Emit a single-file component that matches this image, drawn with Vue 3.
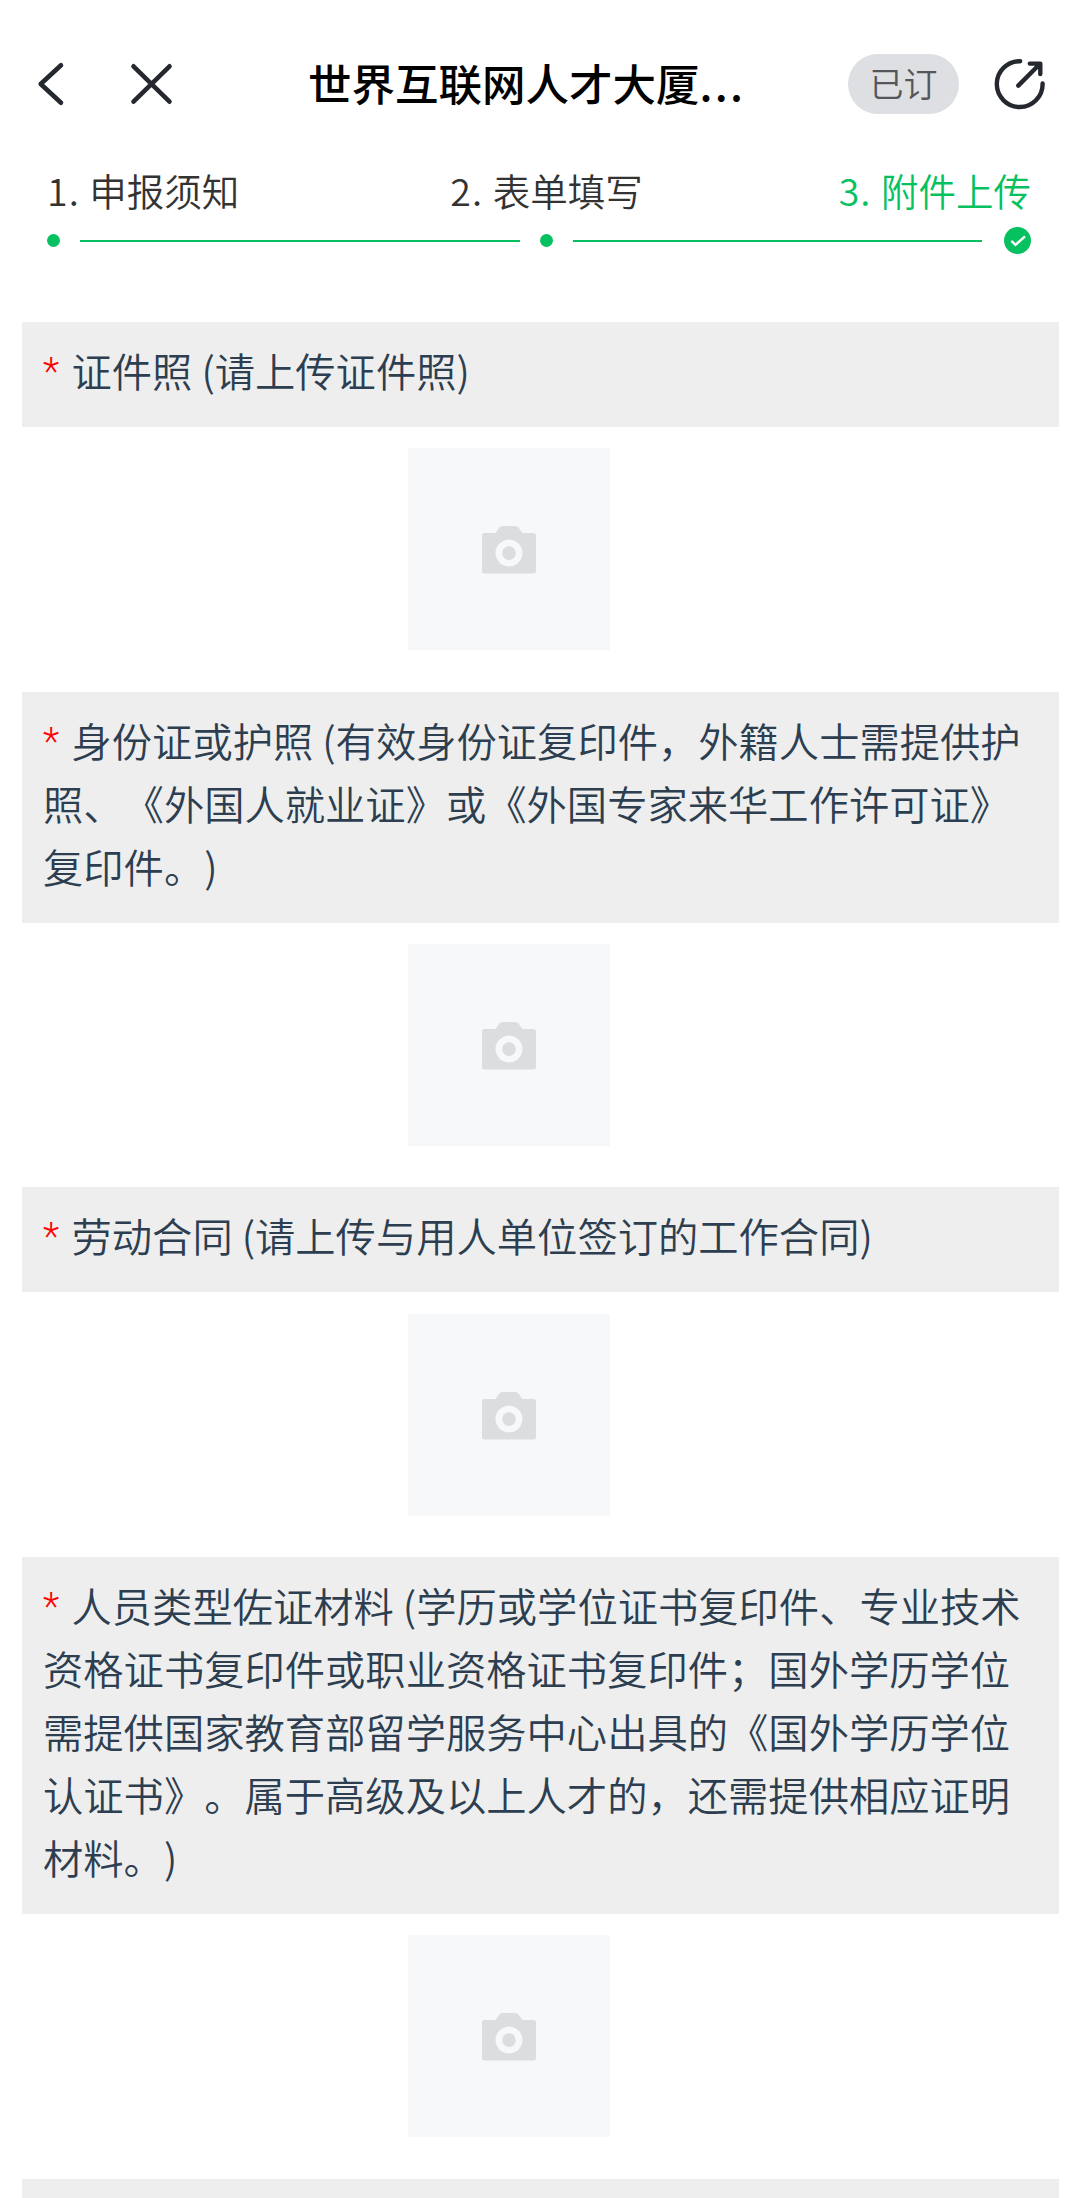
<script setup>
const steps = ['申报须知', '表单填写', '附件上传']

const sections = [
  '证件照 (请上传证件照)',
  '身份证或护照 (有效身份证复印件，外籍人士需提供护照、《外国人就业证》或《外国专家来华工作许可证》复印件。)',
  '劳动合同 (请上传与用人单位签订的工作合同)',
  '人员类型佐证材料 (学历或学位证书复印件、专业技术资格证书复印件或职业资格证书复印件；国外学历学位需提供国家教育部留学服务中心出具的《国外学历学位认证书》。属于高级及以上人才的，还需提供相应证明材料。)',
]
</script>

<template>
  <div class="page">
    <header class="navbar">
      <svg class="back" viewBox="0 0 32 48"><path d="M26 5.3 L5.7 24 L26 42.7" /></svg>
      <svg class="close" viewBox="0 0 48 48"><path d="M6.5 6.3 L42.5 41.7 M42.5 6.3 L6.5 41.7" /></svg>
      <h1 class="title">世界互联网人才大厦<span class="ellipsis">...</span></h1>
      <span class="badge">已订</span>
      <svg class="share" viewBox="0 0 56 56">
        <path d="M29.2 5.2 A22.9 22.9 0 1 0 51.6 27.5" />
        <path d="M27.3 29.6 L48.6 8.3 M38.8 7.6 H49.3 V18" />
      </svg>
    </header>

    <nav class="steps">
      <div class="labels">
        <span v-for="(name, i) in steps" :key="name" class="step" :class="{ active: i === 2 }"><span class="num">{{ i + 1 }}. </span>{{ name }}</span>
      </div>
      <div class="track">
        <i class="dot"></i>
        <i class="line first"></i>
        <i class="dot"></i>
        <i class="line second"></i>
        <svg class="done" viewBox="0 0 27 27">
          <circle cx="13.5" cy="13.5" r="13.5" />
          <path d="M7.4 13.8 L11.5 17.9 L21 9.3" />
        </svg>
      </div>
    </nav>

    <main class="list">
      <section v-for="text in sections" :key="text" class="item">
        <div class="label"><span class="required">*</span>{{ text }}</div>
        <div class="upload">
          <svg class="camera" viewBox="0 0 54 48">
            <path fill-rule="evenodd" d="M2.5 7 H13.5 L17.5 1.6 Q18.7 0 20.5 0 H33.5 Q35.3 0 36.5 1.6 L40.5 7 H51.5 Q54 7 54 9.5 V45 Q54 47.5 51.5 47.5 H2.5 Q0 47.5 0 45 V9.5 Q0 7 2.5 7 Z M27 13.6 a13.5 13.5 0 1 0 .01 0 Z" />
            <circle cx="27" cy="27.1" r="6.8" />
          </svg>
        </div>
      </section>
      <section class="item next"></section>
    </main>
  </div>
</template>

<style>
body {
  margin: 0;
  background: #fff;
}
</style>

<style scoped>
.page {
  box-sizing: border-box;
  height: 2198px;
  overflow: hidden;
  background: #fff;
  font-family: "Noto Sans CJK SC", sans-serif;
  font-weight: 350;
  text-spacing-trim: space-all;
}
.navbar {
  display: flex;
  align-items: center;
  box-sizing: border-box;
  height: 168px;
  padding-left: 35px;
}
.navbar svg {
  flex: none;
  fill: none;
  stroke: #25282f;
  stroke-width: 4.6;
  stroke-linecap: round;
  stroke-linejoin: round;
}
.back {
  width: 32px;
  height: 48px;
}
.close {
  width: 48px;
  height: 48px;
  margin-left: 60px;
}
.title {
  width: 440px;
  margin: 0 0 2px 133px;
  color: #000;
  font-size: 43.5px;
  font-weight: 500;
  line-height: 60px;
  white-space: nowrap;
}
.ellipsis {
  letter-spacing: 2.3px;
}
.badge {
  width: 111px;
  height: 60px;
  margin-left: 100px;
  border-radius: 30px;
  background: #dedfe3;
  color: #55565a;
  font-size: 34px;
  line-height: 58px;
  text-align: center;
}
.share {
  width: 56px;
  height: 56px;
  margin-left: 32px;
}
.navbar .share {
  stroke-width: 4.4;
  stroke-linecap: round;
}
.steps {
  height: 156px;
  margin-top: -2px;
  padding: 0 49px 0 47px;
}
.labels {
  display: flex;
  justify-content: space-between;
  color: #333;
  font-size: 37.5px;
  line-height: 48px;
}
.step:nth-child(2) {
  margin-left: 15px;
}
.num {
  letter-spacing: 1.1px;
}
.labels .active {
  color: #07c160;
}
.track {
  display: flex;
  align-items: center;
  height: 28px;
  margin-top: 12px;
}
.dot {
  width: 13px;
  height: 13px;
  border-radius: 50%;
  background: #07c160;
}
.line {
  height: 2.6px;
  margin-top: 2px;
  margin-left: 20px;
  background: #07c160;
}
.first {
  width: 440px;
  margin-right: 20px;
}
.second {
  width: 409px;
  margin-right: 22px;
}
.done {
  width: 27px;
  height: 27px;
  fill: #07c160;
}
.done path {
  fill: none;
  stroke: #fff;
  stroke-width: 2.4;
}
.list {
  padding: 0 21px 0 22px;
}
.item {
  display: flex;
  flex-direction: column;
  padding-bottom: 41.4px;
}
.label {
  padding: 16px 14px 26px 21px;
  background: #eee;
  color: #2c3e50;
  font-size: 40.3px;
  line-height: 63px;
}
.required {
  display: inline-block;
  width: 28.5px;
  color: #f00;
  font-family: Roboto, sans-serif;
  font-weight: 300;
  font-size: 38px;
  line-height: 40px;
  vertical-align: 2px;
}
.upload {
  display: flex;
  align-items: center;
  justify-content: center;
  width: 202px;
  height: 202px;
  margin: 21.3px 0 0 386px;
  background: #f7f8fa;
}
.camera {
  width: 54px;
  height: 48px;
  margin-top: 2px;
  fill: #dcdddf;
}
.next {
  height: 105px;
  padding: 0;
  background: #eee;
}
</style>
